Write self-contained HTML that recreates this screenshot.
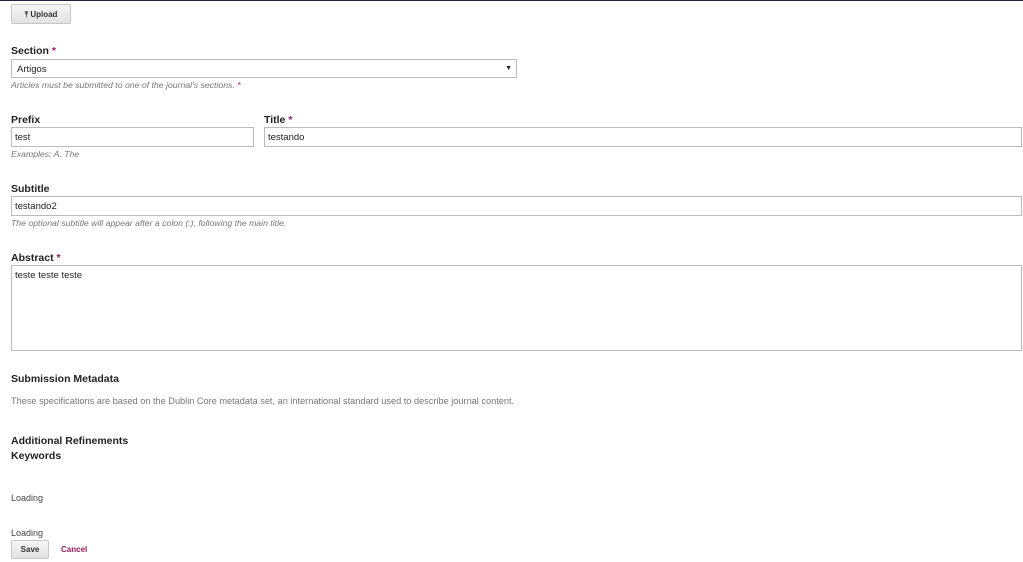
<!DOCTYPE html>
<html><head><style>
body{margin:0;width:1023px;height:562px;background:#fff;font-family:"Liberation Sans",sans-serif;position:relative;overflow:hidden;color:#222}
.a{position:absolute;white-space:nowrap}
.lbl{font-size:10.5px;font-weight:bold;color:#222}
.req{color:#a0185b}
.help{font-size:8.7px;font-style:italic;color:#777}
.in{position:absolute;border:1px solid #bbb;background:#fff;box-sizing:border-box;font-size:9.5px;padding:4px 0 0 3px;color:#222}
.btn{position:absolute;border:1px solid #c8c8c8;border-radius:2px;background:linear-gradient(#f6f6f6,#e2e2e2);box-sizing:border-box;font-size:8px;font-weight:bold;text-align:center;color:#333}
</style></head><body>
<div class="a" style="left:0;top:0;width:1023px;height:1px;background:#223"></div>
<div class="btn" style="left:11px;top:4px;width:60px;height:20px;line-height:19px">⤒ Upload</div>
<div class="a lbl" style="left:11px;top:45px">Section <span class="req">*</span></div>
<div class="in" style="left:11px;top:59px;width:506px;height:19px;padding-left:5px">Artigos<span style="position:absolute;right:4px;top:5px;font-size:7px">▼</span></div>
<div class="a help" style="left:11px;top:80px">Articles must be submitted to one of the journal's sections. <span class="req">*</span></div>
<div class="a lbl" style="left:11px;top:114px">Prefix</div>
<div class="a lbl" style="left:264px;top:114px">Title <span class="req">*</span></div>
<div class="in" style="left:11px;top:127px;width:243px;height:20px">test</div>
<div class="in" style="left:264px;top:127px;width:758px;height:20px">testando</div>
<div class="a help" style="left:11px;top:149px">Examples: A, The</div>
<div class="a lbl" style="left:11px;top:183px">Subtitle</div>
<div class="in" style="left:11px;top:196px;width:1011px;height:20px">testando2</div>
<div class="a help" style="left:11px;top:218px">The optional subtitle will appear after a colon (:), following the main title.</div>
<div class="a lbl" style="left:11px;top:252px">Abstract <span class="req">*</span></div>
<div class="in" style="left:11px;top:265px;width:1011px;height:86px">teste teste teste</div>
<div class="a lbl" style="left:11px;top:373px">Submission Metadata</div>
<div class="a" style="left:11px;top:396px;font-size:9.2px;color:#777">These specifications are based on the Dublin Core metadata set, an international standard used to describe journal content.</div>
<div class="a lbl" style="left:11px;top:435px">Additional Refinements</div>
<div class="a lbl" style="left:11px;top:450px">Keywords</div>
<div class="a" style="left:11px;top:493px;font-size:9px;color:#444">Loading</div>
<div class="a" style="left:11px;top:528px;font-size:9px;color:#444">Loading</div>
<div class="btn" style="left:11px;top:540px;width:38px;height:19px;line-height:17px">Save</div>
<div class="a" style="left:61px;top:545px;font-size:8px;font-weight:bold;color:#a0185b">Cancel</div>
</body></html>
